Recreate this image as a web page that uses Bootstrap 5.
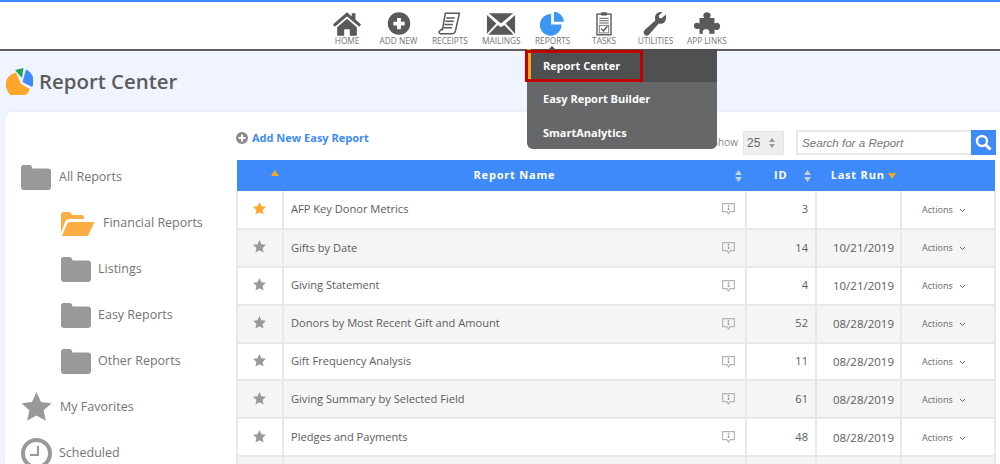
<!DOCTYPE html>
<html lang="en">
<head>
<meta charset="UTF-8">
<meta name="viewport" content="width=device-width, initial-scale=1.0">
<title>Report Center</title>
<link href="https://cdn.jsdelivr.net/npm/bootstrap@5.3.3/dist/css/bootstrap.min.css" rel="stylesheet">
<script src="https://cdn.jsdelivr.net/npm/bootstrap@5.3.3/dist/js/bootstrap.bundle.min.js"></script>
<style>
html, body { height: 464px; overflow: hidden; }
body { background: #eff4fe; font-family: "Open Sans", "Liberation Sans", sans-serif; color: #5c5c5c; }
.top-bar { background: #fff; border-top: 2px solid #3e8afa; border-bottom: 2px solid #5f5f5f; height: 51px; position: relative; }
.top-links { padding-left: 54px; }
.top-item { width: 51.4px; color: #757575; font-size: 8.3px; line-height: 10px; text-decoration: none; white-space: nowrap; }
.top-item svg { display: block; height: 25px; width: 30px; margin: 9px auto 0; }
.top-item.on { position: relative; }
.top-item.on::after { content: ""; position: absolute; left: 21px; top: 44px; border: 4px solid transparent; border-top: 0; border-bottom-color: #4f5052; }
.drop-menu { position: absolute; left: 527px; top: 47px; width: 190px; height: 100px; background: #666768; border-radius: 0 0 6px 6px; z-index: 5; }
.drop-menu a { display: block; height: 33.4px; line-height: 33px; padding-left: 16px; color: #fff; font-size: 11px; font-weight: 700; text-decoration: none; }
.drop-menu a.on { background: #4f5052; border-left: 4px solid #f5a623; padding-left: 12px; position: relative; }
.red-box { position: absolute; left: -6px; top: 1px; width: 118px; height: 32px; border: 3px solid #c00000; }
.page-head { height: 61px; padding-left: 6px; }
.page-head h1 { font-size: 20.4px; font-weight: 600; margin: 0 0 0 6px; color: #5c5c5c; }
.main-panel { margin-left: 5px; background: #fff; border-radius: 6px 0 0 0; box-shadow: 0 0 3px #dfe4ee; height: 352px; overflow: hidden; }
.side-col { width: 231px; flex: none; padding: 42px 0 0 16px; }
.side-row { height: 46px; font-size: 12.5px; color: #747474; }
.side-row.sub { padding-left: 40px; }
.side-row svg { flex: none; margin-right: 8px; }
.side-row.sub svg { margin-right: 7px; }
.side-row.sub svg.open-ico { margin-right: 8px; }
.side-row svg.clock-ico { margin-right: 7px; }
.list-col { width: 764px; flex: none; }
.tool-row { height: 48px; padding: 18px 4px 5px 0; }
.add-link { color: #3e8afa; font-size: 11px; font-weight: 700; text-decoration: none; margin-bottom: 9px; }
.show-lbl { font-size: 10px; color: #888; margin-right: 5px; }
.show-box { width: 41px; height: 24px; background: #eee; border: 1px solid #e4e4e4; color: #666; font-family: "Liberation Sans", sans-serif; font-size: 12px; line-height: 20px; padding-left: 3px; margin-right: 12px; }
.search-box { width: 175px; height: 25px; border: 2px solid #e8e8e8; border-right: 0; font-family: "Liberation Sans", sans-serif; font-size: 11.6px; font-style: italic; color: #777; line-height: 21px; padding-left: 4px; }
.search-btn { width: 25px; height: 25px; background: #3e8afa; }
.report-tbl { width: 758px; table-layout: fixed; margin: 0; font-size: 11.1px; color: #5c5c5c; }
.report-tbl th { background: #3e8afa; color: #fff; height: 31px; padding: 0; font-size: 11px; font-weight: 700; letter-spacing: .8px; border: 0; vertical-align: middle; text-align: center; position: relative; }
.report-tbl td { height: 37.9px; padding: 0 7px; border: 1px solid #e8e8e8; border-width: 0 0 2px 2px; vertical-align: middle; background: transparent; box-shadow: none; }
.report-tbl td:last-child { border-right: 2px solid #e8e8e8; }
.report-tbl tr.alt td { background: #f5f5f5; }
.sort-mark { position: absolute; top: 10px; }
.star-cell svg { display: block; margin: -2px 0 0 15px; }
.note-ico { margin-right: 3px; }
.num-cell { padding-right: 7px !important; }
.date-cell { font-size: 11.5px; padding-right: 6px !important; }
.id-head { padding-left: 28px !important; text-align: left !important; }
.run-head { padding-left: 10px !important; }
.act-cell { color: #666; font-size: 9px; padding-left: 20px !important; }
</style>
</head>
<body>
<div class="top-bar">
  <div class="top-links d-flex justify-content-center text-center">
    <a class="top-item" href="#"><svg viewBox="0 0 32 26"><path fill="#595959" d="M16 1 1 14l2 2.500 13-11 13 11 2-2.500-6-5.200V2h-4v3.500zM5.500 17 16 8l10.500 9v9H19v-7h-6v7H5.500z"/></svg>HOME</a>
    <a class="top-item" href="#"><svg viewBox="0 0 32 26"><circle cx="16" cy="13" r="12" fill="#595959"/><path fill="#fff" d="M14 7h4v4h4v4h-4v4h-4v-4h-4v-4h4z"/></svg>ADD NEW</a>
    <a class="top-item" href="#"><svg viewBox="0 0 32 26"><path fill="#fff" stroke="#595959" stroke-width="1.600" d="M11 2h15l-4 18c-.5 2.500-2 4-4 4H7c-2 0-3-1-2.500-2.500L7 19l1 .5z"/><path stroke="#595959" stroke-width="1.600" d="M12 7h9M11 10.500h9M10 14h9M9 17.500h9"/></svg>RECEIPTS</a>
    <a class="top-item" href="#"><svg viewBox="0 0 32 26"><path fill="#595959" d="M3 2h26L16 13zM1 4l10 9L1 24zM31 4 21 13l10 11zM2.500 25l10-10.500L16 17l3.500-2.500 10 10.500z"/></svg>MAILINGS</a>
    <a class="top-item on" href="#"><svg viewBox="0 0 32 26"><path fill="#3c96f5" d="M14 3v11h11a11.500 11.500 0 1 1-11-11z"/><path fill="#3c96f5" d="M17 .5A10.500 10.500 0 0 1 27.500 11H17z"/></svg>REPORTS</a>
    <a class="top-item" href="#"><svg viewBox="0 0 32 26"><rect x="8.500" y="3" width="15" height="22" fill="#fff" stroke="#595959" stroke-width="1.500"/><rect x="13" y="1" width="6" height="3.500" fill="#595959"/><path stroke="#595959" d="M11 7.500h10M11 10h10M11 12.500h10"/><rect x="11" y="15" width="10" height="8" fill="none" stroke="#777"/><path fill="none" stroke="#595959" stroke-width="1.500" d="m13 18.500 2.500 2.500 4-5"/></svg>TASKS</a>
    <a class="top-item" href="#"><svg viewBox="0 0 32 26"><path fill="#595959" d="M27.500 3.500 23 7.500l-2.500-.5-.5-2.500 4-3.500c-4-1-8 1.500-8 6 0 1 .2 1.800.5 2.500L5 20c-2 2-1 4 0 5s3 1.500 4.500 0L20 13c4 1.500 9-1.500 7.500-9.500z"/></svg>UTILITIES</a>
    <a class="top-item" href="#"><svg viewBox="0 0 32 26"><path fill="#595959" d="M8 7h5c-2-3-.5-6 3-6s5 3 3 6h5v6c3-2 6-.5 6 3s-3 5-6 3v5h-6c1.500-3 0-5-3-5s-4.500 2-3 5H8v-6c-3 2-6 .5-6-2.500s3-4.500 6-2.500z"/></svg>APP LINKS</a>
  </div>
  <div class="drop-menu">
    <a class="on" href="#">Report Center<span class="red-box"></span></a>
    <a href="#">Easy Report Builder</a>
    <a href="#">SmartAnalytics</a>
  </div>
</div>

<div class="page-head d-flex align-items-center">
  <svg width="27" height="27" viewBox="0 0 27 27"><path fill="#fda629" d="M10 4.500 15 16l9 5A12.500 12.500 0 1 1 10 4.500z"/><path fill="#1fa45c" d="M9 2 17.500 0 16 10z"/><path fill="#3e8afa" d="M20 1.500A12.500 12.500 0 0 1 26 19l-9.500-5z"/></svg>
  <h1>Report Center</h1>
</div>

<div class="main-panel d-flex">
  <div class="side-col">
    <div class="side-row d-flex align-items-center"><svg width="30" height="25" viewBox="0 0 30 25"><use href="#folder"/></svg>All Reports</div>
    <div class="side-row sub d-flex align-items-center"><svg class="open-ico" width="34" height="25" viewBox="0 0 34 25"><path fill="#fdae42" d="M0 22V4c0-2 1-3 2.500-3h6l3 3h9c1.500 0 2.500 1 2.500 3v1H9c-3 0-4 1-5 3zM1 25l5-12c.5-1 1.500-2 3-2h24.500l-6 13c-.5.700-1 1-2 1z"/></svg>Financial Reports</div>
    <div class="side-row sub d-flex align-items-center"><svg width="30" height="25" viewBox="0 0 30 25"><use href="#folder"/></svg>Listings</div>
    <div class="side-row sub d-flex align-items-center"><svg width="30" height="25" viewBox="0 0 30 25"><use href="#folder"/></svg>Easy Reports</div>
    <div class="side-row sub d-flex align-items-center"><svg width="30" height="25" viewBox="0 0 30 25"><use href="#folder"/></svg>Other Reports</div>
    <div class="side-row d-flex align-items-center"><svg width="31" height="30" viewBox="0 0 24 24"><use href="#star"/></svg>My Favorites</div>
    <div class="side-row d-flex align-items-center"><svg class="clock-ico" width="31" height="31" viewBox="0 0 31 31"><circle cx="15.500" cy="15.500" r="13.500" fill="#fff" stroke="#999" stroke-width="4"/><path fill="none" stroke="#999" stroke-width="2" d="M17 8v9h-8"/></svg>Scheduled</div>
  </div>

  <div class="list-col">
    <div class="tool-row d-flex align-items-center justify-content-between">
      <a class="add-link d-flex align-items-center" href="#"><svg class="me-1" width="12" height="12" viewBox="0 0 12 12"><circle cx="6" cy="6" r="6" fill="#8c8c8c"/><path fill="#fff" d="M5 2.500h2V5h2.500v2H7v2.500H5V7H2.500V5H5z"/></svg>Add New Easy Report</a>
      <div class="d-flex align-items-center">
        <span class="show-lbl">Show</span>
        <div class="show-box d-flex justify-content-between align-items-center pe-2">25 <svg width="6" height="10" viewBox="0 0 6 10"><path fill="#999" d="M3 0l3 4H0zM3 10 0 6h6z"/></svg></div>
        <div class="search-box">Search for a Report</div>
        <div class="search-btn d-flex align-items-center justify-content-center"><svg width="17" height="17" viewBox="0 0 17 17"><circle cx="7" cy="7" r="5" fill="none" stroke="#fff" stroke-width="2.400"/><path stroke="#fff" stroke-width="3" d="m10.500 10.500 5 5"/></svg></div>
      </div>
    </div>

    <table class="table report-tbl">
      <colgroup><col style="width:46px"><col style="width:463px"><col style="width:70px"><col style="width:85px"><col style="width:94px"></colgroup>
      <thead>
        <tr>
          <th><svg class="sort-mark" style="left:34px" width="8" height="6" viewBox="0 0 8 6"><path fill="#f5a623" d="M4 0l4 6H0z"/></svg></th>
          <th>Report Name<svg class="sort-mark" style="right:4px" width="7" height="12" viewBox="0 0 7 12"><use href="#sort"/></svg></th>
          <th class="id-head">ID<svg class="sort-mark" style="right:5px" width="7" height="12" viewBox="0 0 7 12"><use href="#sort"/></svg></th>
          <th class="run-head">Last Run <svg width="8" height="6" viewBox="0 0 8 6"><path fill="#f5a623" d="M0 0h8L4 6z"/></svg></th>
          <th></th>
        </tr>
      </thead>
      <tbody id="report-rows"></tbody>
    </table>
  </div>
</div>

<svg width="0" height="0" class="position-absolute">
  <defs>
    <path id="folder" fill="#999" d="M0 3c0-2 1-3 2.500-3h6c1.500 0 2.500 1 3 3.500H27c2 0 3 1 3 3V22c0 2-1 3-3 3H3c-2 0-3-1-3-3z"/>
    <path id="star" fill="#999" d="M12 0l3.600 8 8.400.9-6.300 5.700 1.800 8.400L12 18.700 4.500 23l1.800-8.400L0 8.900 8.400 8z"/>
    <path id="sort" fill="#c5cfdc" d="M3.500 0 7 5H0zM3.500 12 0 7h7z"/>
  </defs>
</svg>

<script>
const reports = [
  ['AFP Key Donor Metrics', 3, '', true],
  ['Gifts by Date', 14, '10/21/2019'],
  ['Giving Statement', 4, '10/21/2019'],
  ['Donors by Most Recent Gift and Amount', 52, '08/28/2019'],
  ['Gift Frequency Analysis', 11, '08/28/2019'],
  ['Giving Summary by Selected Field', 61, '08/28/2019'],
  ['Pledges and Payments', 48, '08/28/2019'],
  ['', '', '']
];
document.getElementById('report-rows').innerHTML = reports.map((r, i) => `
  <tr class="${i % 2 ? 'alt' : ''}">
    <td class="star-cell px-0">${r[0] ? `<svg width="13" height="13" viewBox="0 0 24 24"><path fill="${r[3] ? '#fda629' : '#999'}" d="M12 0l3.600 8 8.400.9-6.300 5.700 1.800 8.400L12 18.700 4.500 23l1.800-8.400L0 8.900 8.400 8z"/></svg>` : ''}</td>
    <td><div class="d-flex justify-content-between align-items-center">${r[0]}${r[0] ? `<svg class="note-ico" width="13" height="12" viewBox="0 0 13 12"><path fill="none" stroke="#b5b5b5" stroke-width="1.200" d="M.6.600h11.800v8H8L6.500 11 5 8.600H.6z"/><path stroke="#999" stroke-width="1.500" d="M6.500 2v1.500M6.500 4.500V7"/></svg>` : ''}</div></td>
    <td class="num-cell text-end">${r[1]}</td>
    <td class="date-cell text-end">${r[2]}</td>
    <td class="act-cell">${r[0] ? `Actions <svg class="ms-1" width="7" height="5" viewBox="0 0 7 5"><path fill="none" stroke="#666" d="m1 1 2.500 2.500L6 1"/></svg>` : ''}</td>
  </tr>`).join('');
</script>
</body>
</html>
